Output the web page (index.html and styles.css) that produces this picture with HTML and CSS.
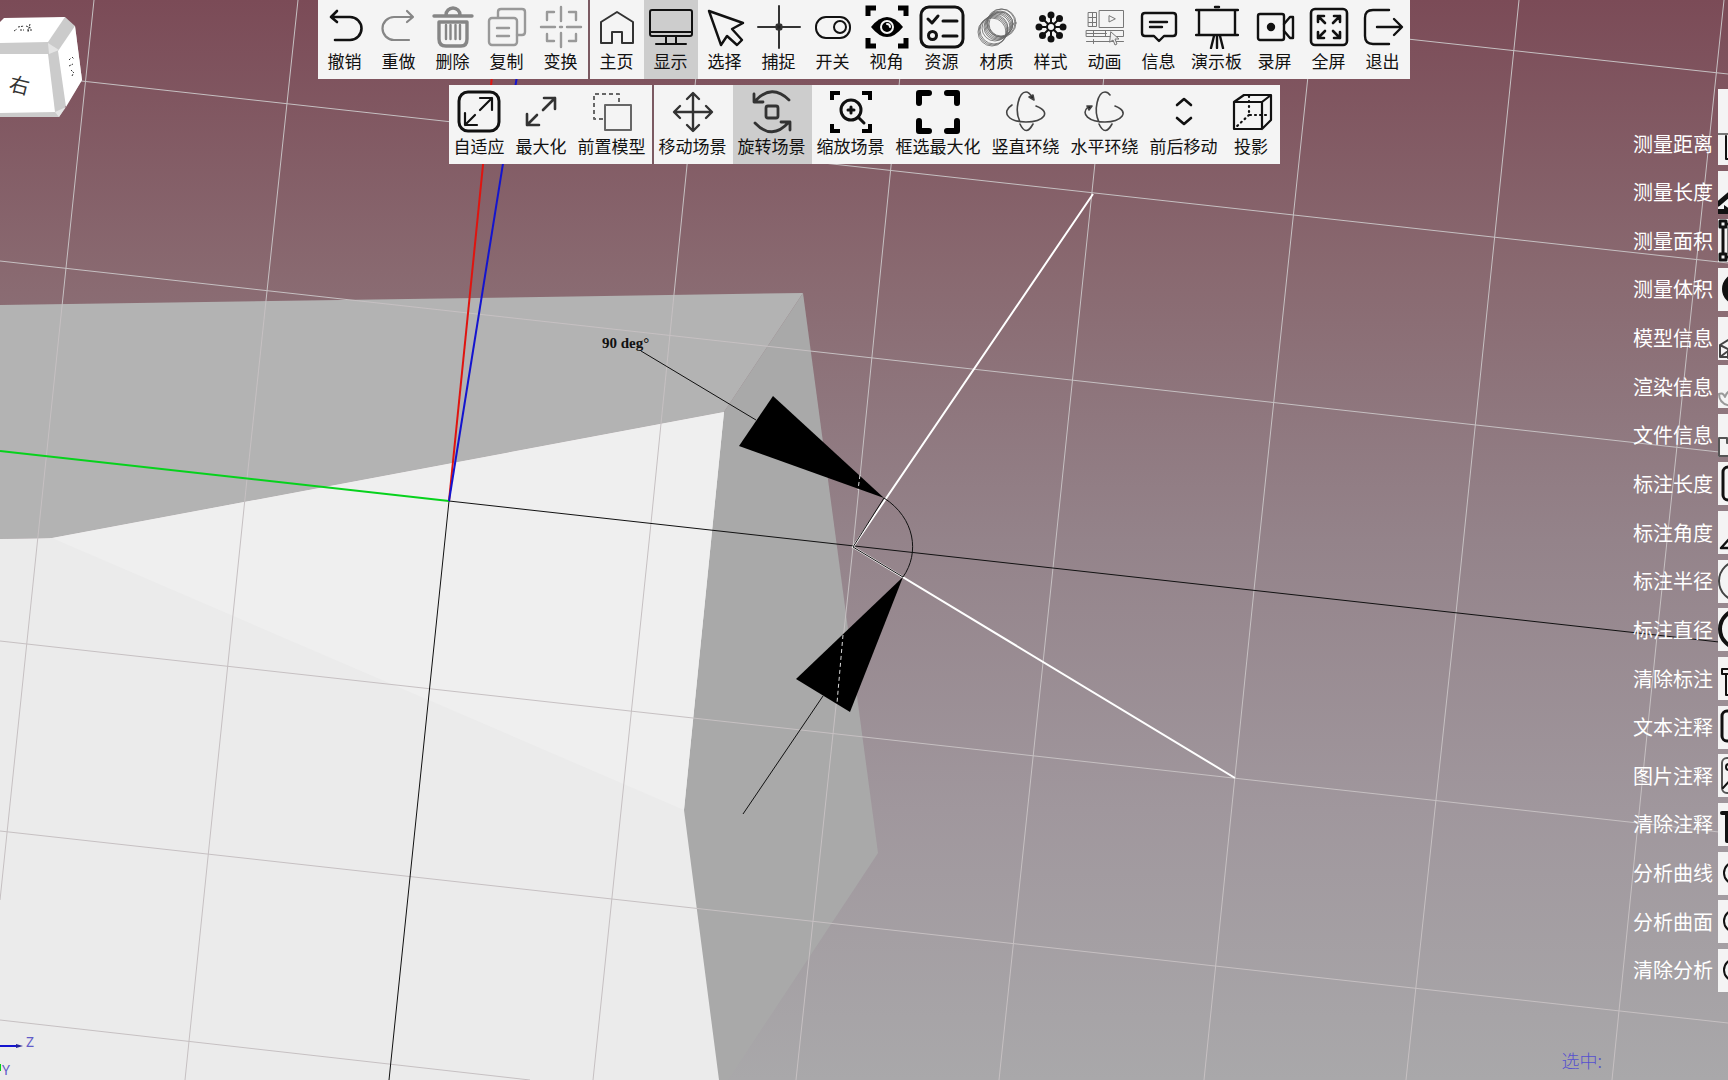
FILE: index.html
```html
<!DOCTYPE html>
<html lang="zh-CN">
<head>
<meta charset="utf-8">
<title>三维模型查看器</title>
<link rel="stylesheet" href="styles.css">
</head>
<body>
<main class="stage">
  <svg class="scene" viewBox="0 0 1728 1080" preserveAspectRatio="xMidYMid slice" role="img" aria-label="三维场景">
    <!-- solid -->
    <polygon fill="#a9a9a9" points="803,293 878,853 728,1080 719,1080 600,810 724,412"/>
    <polygon fill="#b3b3b3" points="0,305 803,293 724,412 52,538 0,539"/>
    <polygon fill="#ebebeb" points="0,539 52,538 724,412 684,810 719,1080 0,1080"/>
    <polygon fill="#efefef" points="52,538 724,412 684,810"/>
    <!-- ground grid -->
    <g class="grid">
      <path d="M94 0L0 900M298 0L247 479L185 1080M696 76L651 523L593 1080M900 76L853 547L796 1080M1104 76L1053 568L999 1080M1308 76L1254 590L1204 1080M1519 0L1456 613L1406 1080M1724 0L1657 636L1612 1080"/>
      <path d="M1050 0L1728 74M0 72L1728 263M0 261L1728 453M0 641L1728 833M0 831L1728 1023M0 1020L530 1080"/>
    </g>
    <path class="axis-dark" d="M449 501L1728 643M449 501L389 1080"/>
    <path class="axis axis-green" d="M0 451L449 501"/>
    <path class="axis axis-red" d="M449 501L492 76"/>
    <path class="axis axis-blue" d="M449 501L517 76"/>
    <!-- angle dimension -->
    <path class="edge" d="M1093 194L853 547L1235 778"/>
    <path class="dim" d="M884 498L853 547L903 577M884 498C915 518 920 553 903 577M641 351L756 420M743 814L823 696"/>
    <polygon points="884,498 773,396 739,446"/>
    <polygon points="903,577 796,679 850,712"/>
    <path class="hidden-line" d="M860 475L858 490M843 635L837 703"/>
    <text class="dim-text" x="602" y="348">90 deg°</text>
    <!-- view cube -->
    <g>
      <polygon fill="#cbcbcb" points="0,23 65,17 75,26 82,80 59,117 0,117"/>
      <polygon fill="#fff" points="0,22 4,18 65,17 48,42 0,43"/>
      <polygon fill="#fff" points="0,54 48,54 55,112 0,113"/>
      <polygon fill="#fff" points="75,26 82,80 66,107 58,51"/>
      <polygon fill="#e4e4e4" points="48,43 59,50 49,54"/>
      <polygon fill="#e4e4e4" points="55,112 66,107 59,117"/>
      <path class="cube-mark" d="M14 31l3-2M18 27l6-1M20 30h4M26 26l5 2M27 30h6M30 24l-2 8M69 60l2-2M72 57l2 2M69 66l4-2M71 70l3 3M72 76l1-2"/>
      <text class="cube-text" transform="translate(8 90) rotate(14)">右</text>
    </g>
    <!-- axis indicator -->
    <path class="axis axis-blue" d="M0 1046H17"/>
    <polygon fill="#22229a" points="16,1044 23,1046 16,1048"/>
    <path class="axis axis-green" d="M0 1064V1071"/>
    <text class="axis-text" x="26" y="1047">Z</text>
    <text class="axis-text" x="2" y="1075">Y</text>
  </svg>

  <header class="bars">
    <nav class="bar" aria-label="主工具栏">
      <button class="tool"><svg viewBox="0 0 44 44" stroke-width="2.6"><path d="M8 12H27a11.500 11.500 0 0 1 0 23H12M14 6L8 12l6 5"/></svg>撤销</button>
      <button class="tool"><svg class="dim-icon" viewBox="0 0 44 44" stroke-width="2.2"><path d="M36 12H17a11.500 11.500 0 0 0 0 23H32M30 6l6 6-6 5"/></svg>重做</button>
      <button class="tool"><svg class="dim-icon" viewBox="0 0 44 44" stroke-width="3.4"><path d="M3 11H41M15 10a7 7 0 0 1 14 0M8 17V34q0 7 7 7H30q6 0 6-7V17M8 17H36"/><path stroke-width="2.4" d="M15 20V34M19.500 20V34M24.500 20V34M29 20V34"/></svg>删除</button>
      <button class="tool"><svg class="pale-icon" viewBox="0 0 44 44" stroke-width="2.4"><path d="M13 12V7q0-3 3-3H37q3 0 3 3V27q0 3-3 3H32"/><rect x="4" y="13" width="28" height="27" rx="3"/><path d="M12 23H24M12 31H24"/></svg>复制</button>
      <button class="tool"><svg class="pale-icon" viewBox="0 0 44 44" stroke-width="2.4"><path d="M22 2V16M22 28V42M2 22H16M28 22H42M21 22h2"/><path d="M8 15V7H15M30 7H37V15M8 29V36H15M30 36H37V29"/></svg>变换</button>
      <span class="rule"></span>
      <button class="tool"><svg viewBox="0 0 44 44" stroke="#333"><path d="M6 17L22 7L38 17V38H27V27H17V38H6Z"/></svg>主页</button>
      <button class="tool tool--on" aria-pressed="true"><svg viewBox="0 0 44 44"><rect x="1" y="5" width="42" height="26" rx="2"/><path d="M1 27H43M17 31V38M27 31V38M7 39H37"/></svg>显示</button>
      <button class="tool"><svg viewBox="0 0 44 44" stroke-width="2.4"><path d="M6 6L40 18L29 24L39 35L34 40L24 31L18 40Z"/></svg>选择</button>
      <button class="tool"><svg viewBox="0 0 44 44" stroke="#333"><path d="M22 1V43M1 22H43"/><rect x="19.500" y="19.500" width="5" height="5" rx="1" fill="#222"/></svg>捕捉</button>
      <button class="tool"><svg viewBox="0 0 44 44"><rect x="5" y="12" width="34" height="21" rx="10"/><circle cx="29" cy="22" r="6"/></svg>开关</button>
      <button class="tool"><svg viewBox="0 0 44 44"><path stroke="#000" stroke-width="5" stroke-linecap="butt" stroke-linejoin="miter" d="M3 11V3H11M33 3H41V11M41 33V41H33M11 41H3V33"/><path fill="#000" stroke="none" d="M6 22Q14 12 22 12T38 22Q30 32 22 32T6 22Z"/><circle cx="22" cy="22" r="6" stroke="#f4f4f4" stroke-width="2"/><path stroke="#f4f4f4" d="M22 19a3 3 0 0 1 3 3"/></svg>视角</button>
      <button class="tool tool--wide"><svg class="icon-wide" viewBox="0 0 46 44" stroke-width="3"><rect x="2" y="2" width="42" height="40" rx="8"/><path d="M9 14l4 4 6-7M24 16H38M24 31H38"/><circle cx="13.500" cy="30.500" r="4"/></svg>资源</button>
      <button class="tool"><svg viewBox="0 0 44 44" stroke="#666" stroke-width="0.800"><circle cx="17" cy="27" r="14"/><circle cx="18" cy="26" r="14"/><circle cx="19" cy="25" r="14"/><circle cx="20" cy="23" r="13"/><circle cx="22" cy="22" r="13"/><circle cx="23" cy="21" r="13"/><circle cx="24" cy="20" r="13"/><circle cx="25" cy="19" r="13"/><circle cx="26" cy="18" r="14"/><circle cx="27" cy="18" r="14"/><circle cx="26" cy="19" r="12"/></svg>材质</button>
      <button class="tool"><svg viewBox="0 0 44 44"><circle cx="22" cy="22" r="4"/><path d="M22 9V18M22 26V35M9 22H18M26 22H35M13 13l6 6M25 25l6 6M31 13l-6 6M19 25l-6 6"/><g fill="#111" stroke="none"><circle cx="22" cy="10" r="3.500"/><circle cx="22" cy="34" r="3.500"/><circle cx="10" cy="22" r="3.500"/><circle cx="34" cy="22" r="3.500"/><circle cx="13.500" cy="13.500" r="3.500"/><circle cx="30.500" cy="13.500" r="3.500"/><circle cx="13.500" cy="30.500" r="3.500"/><circle cx="30.500" cy="30.500" r="3.500"/></g></svg>样式</button>
      <button class="tool"><svg viewBox="0 0 44 44" stroke="#777" stroke-width="1"><path d="M16.500 5.500H40.500V22.500H16.500ZM26 11v6l6-3zM5.500 7.500h8v14h-8zM9.500 7.500v14M5.500 12.500h8M5.500 17.500h8M3.500 25.500H40.500V31.500H3.500ZM10.500 25.500v6M22.500 25.500v6M3.500 28.500h20M3.500 36.500H40.500M10.500 34.500v4"/><path fill="#eee" d="M28 27l8 7h-4l2 5-2 1-2-5-3 2z"/></svg>动画</button>
      <button class="tool"><svg viewBox="0 0 44 44" stroke-width="2.400"><path d="M8 8H36q3 0 3 3V28q0 3-3 3H27L22 36L17 31H8q-3 0-3-3V11q0-3 3-3ZM13 17H30M13 22H25"/></svg>信息</button>
      <button class="tool"><svg viewBox="0 0 44 44" stroke-width="2.400"><path d="M1 5H43M1 30H43M4 5V30M40 5V30M20 2h4M19 31L16 43M22 31V43M25 31L28 43"/></svg>演示板</button>
      <button class="tool"><svg viewBox="0 0 44 44" stroke-width="2.400"><rect x="5" y="9" width="26" height="26" rx="2"/><path d="M31 19L37 12H40V33H37L31 26"/><circle cx="18" cy="22" r="3" fill="#111"/></svg>录屏</button>
      <button class="tool"><svg viewBox="0 0 44 44" stroke-width="2.600"><rect x="4" y="4" width="36" height="36" rx="4"/><path d="M11 17V11H17M11 11l7 7M27 11H33V17M33 11l-7 7M11 27V33H17M11 33l7-7M33 27V33H27M33 33l-7-7"/></svg>全屏</button>
      <button class="tool"><svg viewBox="0 0 44 44" stroke-width="2.400"><path d="M28 5H12q-8 0-8 8V31q0 8 8 8H28M16 22H40M33 14l8 8-8 8"/></svg>退出</button>
    </nav>

    <nav class="bar" aria-label="显示工具栏">
      <button class="tool"><svg viewBox="0 0 44 44" stroke-width="2.200"><rect x="2" y="2" width="40" height="39" rx="9" stroke-width="3"/><path d="M23 8H35V20M35 8L23 20M8 23V35H20M8 35L18 25"/></svg>自适应</button>
      <button class="tool"><svg viewBox="0 0 44 44" stroke="#333" stroke-width="2.600"><path d="M25 8H36V19M36 8L24 20M8 24V35H20M8 35L18 25"/></svg>最大化</button>
      <button class="tool"><svg viewBox="0 0 44 44" stroke="#666"><path stroke-dasharray="4 3" stroke-linecap="butt" d="M29 12V4H4V29H13"/><rect x="15" y="15" width="26" height="25"/></svg>前置模型</button>
      <span class="rule"></span>
      <button class="tool"><svg viewBox="0 0 44 44" stroke="#333" stroke-width="2.400"><path d="M22 4V40M4 22H40M16 9l6-6 6 6M16 35l6 6 6-6M9 16l-6 6 6 6M35 16l6 6-6 6"/></svg>移动场景</button>
      <button class="tool tool--on" aria-pressed="true"><svg viewBox="0 0 44 44" stroke="#333" stroke-width="2.800"><rect x="16" y="16" width="12" height="12" rx="2"/><path d="M39 10Q22-7 5 11M4 4V12H13M5 33Q22 51 39 32M31 32H40V40"/></svg>旋转场景</button>
      <button class="tool"><svg viewBox="0 0 44 44" stroke-width="4"><path stroke="#000" stroke-linecap="butt" stroke-linejoin="miter" d="M3 10V3H11M33 3H41V10M41 34V41H33M11 41H3V34"/><g stroke-width="3"><circle cx="22" cy="20" r="10"/><path d="M29 27l6 6M22 17v6M19 20h6"/></g></svg>缩放场景</button>
      <button class="tool"><svg viewBox="0 0 44 44" stroke="#000" stroke-width="6"><path d="M3 13V3H13M31 3H41V13M41 31V41H31M13 41H3V31"/></svg>框选最大化</button>
      <button class="tool"><svg viewBox="0 0 44 44" stroke="#444" stroke-width="1.600"><path d="M8 15C-3 22 4 32 22 32S48 22 32 16M16 32C10 20 15 2 22 2Q25 2 28 7M16 34Q22 47 29 34"/><path fill="#111" d="M25 7l4-2 1 5z"/></svg>竖直环绕</button>
      <button class="tool"><svg viewBox="0 0 44 44" stroke="#444" stroke-width="1.600"><path d="M5 17C-3 24 6 32 22 32S48 22 32 16M16 32C10 20 15 2 22 2Q25 2 27 5M16 34Q22 47 29 34"/><path fill="#111" d="M4 16l5 0-3 4z"/></svg>水平环绕</button>
      <button class="tool"><svg viewBox="0 0 44 44" stroke-width="2.600"><path d="M15 15l7-6 7 6M15 28l7 6 7-6"/></svg>前后移动</button>
      <button class="tool tool--wide"><svg viewBox="0 0 44 44" stroke="#222" stroke-width="2.200"><path d="M5 12H33V39H5ZM5 12L15 5H42L33 12M42 5V30L33 39"/><path stroke-dasharray="1 4" d="M20 6V25H41M20 25L6 38"/></svg>投影</button>
    </nav>
  </header>

  <nav class="side" aria-label="测量与标注">
    <button class="side-item side-item--first">测量距离<svg viewBox="0 0 43 43"><path stroke="#777" d="M0 12H43"/><path d="M8 14V37H40"/></svg></button>
    <button class="side-item">测量长度<svg viewBox="0 0 43 43"><path stroke-width="5" d="M0 33L14 21"/><path fill="#111" stroke="none" d="M0 38h6v-4l6 4h31v5H0z"/></svg></button>
    <button class="side-item">测量面积<svg viewBox="0 0 43 43" stroke-width="3"><path d="M5 9V34M10 5H34M10 38H34M11 9V34"/><rect x="2" y="2" width="6" height="6"/><rect x="2" y="35" width="6" height="6"/></svg></button>
    <button class="side-item">测量体积<svg viewBox="0 0 43 43"><circle cx="20" cy="21" r="15" fill="#111"/></svg></button>
    <button class="side-item">模型信息<svg viewBox="0 0 43 43"><path stroke="#444" d="M2 28L10 23L18 28V40H2ZM2 28L10 32V41M2 40L10 34"/></svg></button>
    <button class="side-item">渲染信息<svg viewBox="0 0 43 43" stroke="#999"><path d="M1 29q0 10 12 12M1 29q4-2 6 3q2-6 6-6"/></svg></button>
    <button class="side-item">文件信息<svg viewBox="0 0 43 43"><path stroke="#555" d="M1 42V24H9V29H43M1 42H43"/></svg></button>
    <button class="side-item">标注长度<svg viewBox="0 0 43 43" stroke-width="3"><rect x="5" y="5" width="32" height="33" rx="5"/></svg></button>
    <button class="side-item">标注角度<svg viewBox="0 0 43 43" stroke-width="2.400"><path d="M32 5L3 37H40"/></svg></button>
    <button class="side-item">标注半径<svg viewBox="0 0 43 43"><circle cx="21" cy="21" r="20" stroke="#444"/></svg></button>
    <button class="side-item">标注直径<svg viewBox="0 0 43 43"><circle cx="21" cy="21" r="19" stroke-width="4"/></svg></button>
    <button class="side-item">清除标注<svg viewBox="0 0 43 43"><path d="M4 12H39V17H4ZM8 17V38H35V17"/></svg></button>
    <button class="side-item">文本注释<svg viewBox="0 0 43 43" stroke-width="3"><rect x="4" y="5" width="35" height="30" rx="5"/></svg></button>
    <button class="side-item">图片注释<svg viewBox="0 0 43 43"><rect stroke="#555" x="4" y="4" width="35" height="35" rx="5"/><path d="M5 34L16 22L30 38"/><circle cx="11" cy="13" r="3"/></svg></button>
    <button class="side-item">清除注释<svg viewBox="0 0 43 43" stroke-width="4"><path d="M4 10H39M9 10V38H35V10"/></svg></button>
    <button class="side-item">分析曲线<svg viewBox="0 0 43 43"><circle cx="17" cy="21" r="11"/></svg></button>
    <button class="side-item">分析曲面<svg viewBox="0 0 43 43"><circle cx="17" cy="21" r="11"/></svg></button>
    <button class="side-item">清除分析<svg viewBox="0 0 43 43"><circle cx="17" cy="21" r="11"/></svg></button>
  </nav>

  <output class="status">选中:</output>
</main>
</body>
</html>
```

FILE: styles.css
```css
* { box-sizing: border-box; }

body {
  margin: 0;
  font-family: "Noto Sans CJK SC", "Noto Sans", sans-serif;
}

.stage {
  position: relative;
  min-height: 100vh;
  overflow: hidden;
  background: linear-gradient(#7b4b57 0%, #896970 25%, #94838a 50%, #a0979d 75%, #a9a8aa 100%);
}

/* 3D viewport fills the window behind the controls */
.scene {
  position: absolute;
  inset: 0;
  width: 100%;
  height: 100%;
}

.scene path { fill: none; }
.grid { stroke: #c6c0c2; }
.axis-dark { stroke: #111; }
.axis { stroke-width: 2; }
.axis-green { stroke: #06d21c; }
.axis-red { stroke: #e0140f; }
.axis-blue { stroke: #1414cf; }
.edge { stroke: #fff; stroke-width: 2; }
.dim { stroke: #111; }
.hidden-line { stroke: #ddd; stroke-dasharray: 4 3; }
.dim-text { font: bold 15px "Liberation Serif", serif; fill: #111; }
.cube-mark { stroke: #333; stroke-dasharray: 2 1; }
.cube-text { font-size: 20px; fill: #333; }
.axis-text { font: 14px "Noto Sans", sans-serif; fill: #625bc8; }

button {
  border: 0;
  margin: 0;
  font-family: inherit;
  cursor: pointer;
}

button svg {
  fill: none;
  stroke: #111;
  stroke-linecap: round;
  stroke-linejoin: round;
}
button svg:not([stroke-width]) { stroke-width: 2; }
button svg[stroke="#333"] { stroke: #333; }
button svg[stroke="#444"] { stroke: #444; }
button svg[stroke="#666"] { stroke: #666; }
button svg[stroke="#777"] { stroke: #777; }
button svg[stroke="#999"] { stroke: #999; }
button svg[stroke="#000"] { stroke: #000; }
button svg.dim-icon { stroke: #868686; }
button svg.pale-icon { stroke: #999; }

.bars {
  position: relative;
  display: flex;
  flex-direction: column;
  align-items: center;
  gap: 6px;
}

.bar {
  display: flex;
  background: #f4f4f4;
}

.tool {
  display: flex;
  flex-direction: column;
  align-items: center;
  min-width: 54px;
  padding: 5px 6px 6px 5px;
  background: none;
  color: #111;
  font-size: 17px;
  line-height: 24px;
  white-space: nowrap;
}

.tool svg {
  width: 44px;
  height: 44px;
  margin: 0 -1px;
  flex: none;
}

.tool svg.icon-wide { width: 46px; }
.tool--wide { min-width: 56px; }
.tool--on { background: #cdcdcd; }

.rule {
  width: 2px;
  background: #7b5a62;
}

/* Collapsed drawer: labels show, tiles run past the window edge */
.side {
  position: absolute;
  top: 122px;
  right: -33px;
  display: flex;
  flex-direction: column;
  justify-content: space-between;
  height: 870px;
}

.side-item {
  position: relative;
  display: flex;
  align-items: center;
  gap: 5px;
  padding: 0;
  background: none;
  color: #fff;
  font-size: 20px;
  line-height: 24px;
}

.side-item svg {
  width: 43px;
  height: 43px;
  background: #f4f4f4;
}

.side-item--first::before {
  content: "";
  position: absolute;
  right: 0;
  bottom: 100%;
  width: 43px;
  height: 33px;
  background: #f4f4f4;
}

.status {
  position: absolute;
  right: 126px;
  bottom: 8px;
  color: #5650cf;
  font-size: 18px;
  font-weight: 300;
  line-height: 24px;
}
```
